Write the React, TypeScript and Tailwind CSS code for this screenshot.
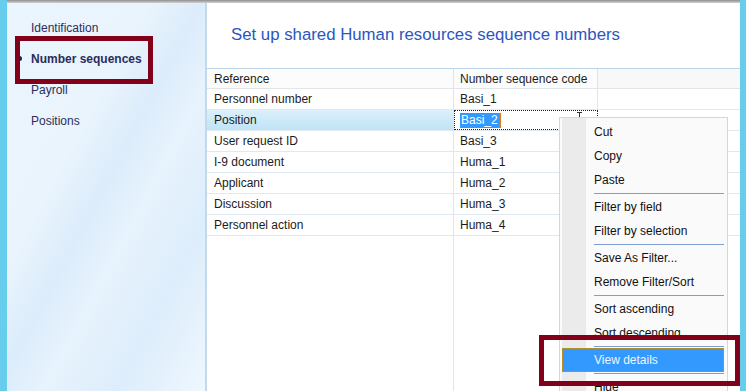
const navItems = [
  { label: "Identification", active: false },
  { label: "Number sequences", active: true },
  { label: "Payroll", active: false },
  { label: "Positions", active: false },
];

const rows = [
  { ref: "Personnel number", code: "Basi_1" },
  { ref: "Position", code: "Basi_2", selected: true },
  { ref: "User request ID", code: "Basi_3" },
  { ref: "I-9 document", code: "Huma_1" },
  { ref: "Applicant", code: "Huma_2" },
  { ref: "Discussion", code: "Huma_3" },
  { ref: "Personnel action", code: "Huma_4" },
];

type MenuEntry = { label?: string; sep?: boolean; active?: boolean };

const menu: MenuEntry[] = [
  { label: "Cut" },
  { label: "Copy" },
  { label: "Paste" },
  { sep: true },
  { label: "Filter by field" },
  { label: "Filter by selection" },
  { sep: true },
  { label: "Save As Filter..." },
  { label: "Remove Filter/Sort" },
  { sep: true },
  { label: "Sort ascending" },
  { label: "Sort descending" },
  { sep: true },
  { label: "View details", active: true },
  { sep: true },
  { label: "Hide" },
];

function ContextMenu() {
  return (
    <div className="absolute left-[559px] top-[117px] w-[169px] h-[290px] border border-[#d6d6d6] pt-[2px] bg-[linear-gradient(to_right,#fafafa_2px,#ebebeb_2px,#ebebeb_26px,#fafafa_26px)]">
      {menu.map((item, i) =>
        item.sep ? (
          <div key={i} className="h-[3px] flex items-center pl-[34px] pr-[3px]">
            <div className="h-px w-full bg-[#7f9ed2]" />
          </div>
        ) : item.active ? (
          <div
            key={i}
            className="h-[24px] ml-[2px] mr-[3px] flex items-center pl-[31px] bg-[#3399ff] border border-[#b38e2c] text-[#eef4ff]"
          >
            {item.label}
          </div>
        ) : (
          <div key={i} className="h-[24px] flex items-center pl-[34px] text-[#111]">
            {item.label}
          </div>
        )
      )}
    </div>
  );
}

export default function App() {
  return (
    <div className="relative w-[746px] h-[391px] overflow-hidden flex bg-white text-[12px] font-['Liberation_Sans',Arial,sans-serif]">
      <div className="w-[7px] bg-[#67cdec]" />
      <div className="flex-1 flex flex-col">
        <div className="h-[3px] bg-gradient-to-b from-[#8f8f8f] to-[#d2d2d2]" />
        <div className="flex flex-1 min-h-0">
          <nav className="w-[200px] border-r-2 border-[#c2d9eb] pt-[9px] pl-[24px] bg-[linear-gradient(118deg,#ebf5fe_0%,#e9f4fd_35%,#dcecfb_48%,#e7f3fd_60%,#ddedfb_78%,#eef7fe_100%)]">
            {navItems.map((n) => (
              <div
                key={n.label}
                className={`h-[31px] flex items-center text-[#2b2d5c] ${n.active ? "font-bold" : ""}`}
              >
                {n.label}
              </div>
            ))}
          </nav>
          <main className="flex-1 flex flex-col">
            <div className="h-[66px] border-b border-[#bcd5e8] flex items-center pl-[24px] pb-[1px] text-[16.8px] text-[#2c55bf]">
              Set up shared Human resources sequence numbers
            </div>
            <div className="h-[20px] flex border-b border-[#e1e6eb] bg-[#f8f8f8] text-[#1b1b1b]">
              <div className="w-[247px] border-r border-[#dde3e9] flex items-center pl-[7px] bg-[#fcfcfc]">
                Reference
              </div>
              <div className="w-[144px] border-r border-[#dde3e9] flex items-center pl-[6px] bg-[#fcfcfc]">
                Number sequence code
              </div>
              <div className="flex-1" />
            </div>
            {rows.map((r) => (
              <div key={r.ref} className="h-[21px] flex border-b border-[#dfe9f2] text-[#1b1b1b]">
                <div
                  className={`w-[247px] border-r border-[#dde6ee] flex items-center pl-[7px] ${
                    r.selected ? "bg-gradient-to-b from-[#dbf0fb] to-[#c0e3f6]" : ""
                  }`}
                >
                  {r.ref}
                </div>
                {r.selected ? (
                  <div className="relative w-[144px] border border-dotted border-[#222] flex items-center pl-[5px]">
                    <span className="bg-[#3399ff] text-white leading-[15px] px-px">{r.code}</span>
                    <span className="w-[2px] h-[15px] bg-[#e57a12]" />
                    <div className="absolute left-[124px] top-[1px] w-px h-[8px] bg-[#333]" />
                    <div className="absolute left-[122px] top-[1px] w-[5px] h-px bg-[#333]" />
                  </div>
                ) : (
                  <div className="w-[144px] border-r border-[#dde6ee] flex items-center pl-[6px]">
                    {r.code}
                  </div>
                )}
                <div className="flex-1" />
              </div>
            ))}
            <div className="flex-1 flex">
              <div className="w-[247px] border-r border-[#dde6ee]" />
            </div>
          </main>
        </div>
      </div>
      <div className="w-[6px] bg-[#67cdec]" />

      <ContextMenu />

      {/* annotation boxes */}
      <div className="absolute left-[15px] top-[36px] w-[138px] h-[48px] border-[5px] border-[#83001b]" />
      <div className="absolute left-[19px] top-[56px] w-[3px] h-[5px] rounded-r-full bg-[#1f2457]" />
      <div className="absolute left-[539px] top-[335px] w-[201px] h-[51px] border-[5px] border-[#83001b]" />
    </div>
  );
}
